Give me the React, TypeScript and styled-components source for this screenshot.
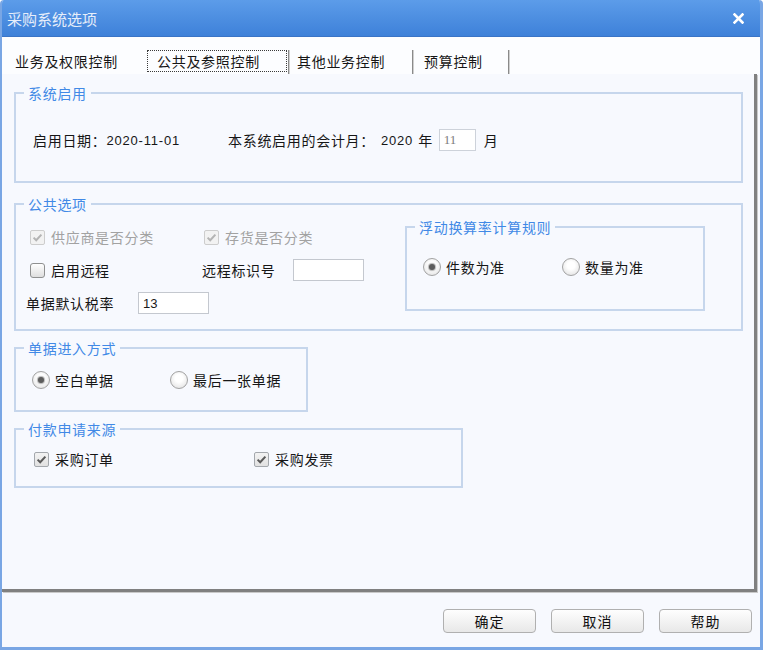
import React from "react";
import styled, { createGlobalStyle } from "styled-components";

const cjk = `"Noto Sans CJK SC", "Noto Sans", sans-serif`;
const num = `"Liberation Sans", Arial, sans-serif`;

const GlobalStyle = createGlobalStyle`
  html, body { margin: 0; padding: 0; }
  body { width: 763px; height: 650px; overflow: hidden; background: #ffffff; font-family: ${cjk}; }
  * { box-sizing: border-box; }
`;

const Window = styled.div`
  width: 763px;
  height: 650px;
  display: flex;
  flex-direction: column;
  background: #f7f9fe;
  border-left: 2px solid #79a6e4;
  border-right: 3px solid #79a6e4;
  border-bottom: 3px solid #79a6e4;
  border-radius: 4px 4px 0 0;
  overflow: hidden;
  font-family: ${cjk};
  font-size: 14px;
  letter-spacing: 0.7px;
  color: #161616;
`;

const TitleBar = styled.div`
  flex: none;
  height: 37px;
  margin: 0 -3px 0 -2px;
  padding: 0 19px 0 7px;
  display: flex;
  align-items: center;
  justify-content: space-between;
  background: linear-gradient(#5c9ce9, #3e81d9);
  border-bottom: 1px solid #3a74c6;
`;

const Title = styled.span`
  font-size: 15px;
  color: #e6eefa;
  letter-spacing: 0;
`;

const CloseBtn = styled.span`
  display: flex;
  width: 11px;
  height: 11px;
`;

const TabStrip = styled.div`
  flex: none;
  height: 37px;
  padding-top: 13px;
  display: flex;
  align-items: flex-end;
  background: #fcfdff;
`;

const Tab = styled.div<{ $w: number; $pl: number }>`
  width: ${(p) => p.$w}px;
  height: 24px;
  padding-left: ${(p) => p.$pl}px;
  display: flex;
  align-items: center;
  padding-bottom: 2px;
  white-space: nowrap;
`;

const FocusBox = styled.div`
  width: 140px;
  height: 22px;
  margin-left: 1px;
  padding-left: 9px;
  display: flex;
  align-items: center;
  border: 1px dotted #3a3a3a;
`;

const TabSep = styled.div`
  width: 2px;
  height: 24px;
  border-left: 1px solid #8a8a8a;
  border-right: 1px solid #cfcfcf;
`;

const Panel = styled.div`
  flex: none;
  height: 518px;
  margin-right: 3px;
  padding: 10px 0 0 12px;
  display: flex;
  flex-direction: column;
  border-right: 3px solid #808080;
  border-bottom: 3px solid #808080;
  box-shadow: 1px 1px 0 #c9c9c9;
`;

const Group = styled.fieldset<{ $w: number; $h: number; $mt?: number }>`
  flex: none;
  width: ${(p) => p.$w}px;
  height: ${(p) => p.$h}px;
  margin: ${(p) => p.$mt ?? 0}px 0 0 0;
  padding: 0;
  min-width: 0;
  border: 2px solid #c6d6ec;
`;

const Legend = styled.legend`
  margin-left: 8px;
  padding: 0 4px;
  line-height: 18px;
  font-size: 14px;
  color: #4189e6;
`;

const GroupBody = styled.div<{ $pt: number; $pl: number }>`
  padding: ${(p) => p.$pt}px 0 0 ${(p) => p.$pl}px;
  display: flex;
  align-items: center;
`;

const Row = styled.div`
  display: flex;
  align-items: center;
  height: 22px;
  white-space: nowrap;
`;

const Cell = styled.div<{ $w?: number }>`
  display: flex;
  align-items: center;
  white-space: nowrap;
  width: ${(p) => (p.$w ? `${p.$w}px` : "auto")};
  flex: none;
`;

const Num = styled.span<{ $ml?: number }>`
  font-family: ${num};
  font-size: 13px;
  letter-spacing: 0.8px;
  margin-left: ${(p) => p.$ml ?? 0}px;
`;

const Text = styled.span<{ $ml?: number; $w?: number; $disabled?: boolean }>`
  margin-left: ${(p) => p.$ml ?? 0}px;
  width: ${(p) => (p.$w ? `${p.$w}px` : "auto")};
  flex: none;
  color: ${(p) => (p.$disabled ? "#a2a2a2" : "#161616")};
`;

const TextBox = styled.input<{ $w: number; $ml?: number; $gray?: boolean }>`
  width: ${(p) => p.$w}px;
  height: 22px;
  margin: 0 0 0 ${(p) => p.$ml ?? 0}px;
  padding: 0 4px;
  border: 1px solid ${(p) => (p.$gray ? "#cdd2da" : "#c4c8cf")};
  background: #ffffff;
  outline: none;
  font-family: ${(p) => (p.$gray ? `"Liberation Serif", serif` : num)};
  font-size: 13px;
  color: ${(p) => (p.$gray ? "#7c7c7c" : "#1a1a1a")};
`;

const LeftGrid = styled.div`
  width: 389px;
  flex: none;
  padding: 13px 0 0 10px;
  display: grid;
  grid-template-columns: 176px 1fr;
  grid-auto-rows: 22px;
  row-gap: 11px;
  align-items: center;
`;

const Span2 = styled.div`
  grid-column: 1 / span 2;
  display: flex;
  align-items: center;
`;

const SplitBody = styled.div`
  display: flex;
  align-items: flex-start;
`;

const Item = styled.label<{ $w?: number; $ml?: number }>`
  display: flex;
  align-items: center;
  gap: 6px;
  width: ${(p) => (p.$w ? `${p.$w}px` : "auto")};
  margin-left: ${(p) => p.$ml ?? 0}px;
  flex: none;
  white-space: nowrap;
`;

const Box = styled.span<{ $disabled?: boolean; $checked?: boolean }>`
  width: 15px;
  height: 15px;
  flex: none;
  display: flex;
  align-items: center;
  justify-content: center;
  border: 1px solid ${(p) => (p.$disabled ? "#cdcdcd" : p.$checked ? "#a4a8ad" : "#8f9090")};
  border-radius: ${(p) => (p.$checked ? 2 : 3)}px;
  background: ${(p) =>
    p.$disabled ? "#f2f2f2" : p.$checked ? "linear-gradient(#f3f3f3, #e1e1e1)" : "linear-gradient(#ffffff, #dedede)"};
`;

const Radio = styled.span<{ $checked?: boolean }>`
  position: relative;
  width: 18px;
  height: 18px;
  flex: none;
  border-radius: 50%;
  border: 1px solid #a2a2a2;
  background: radial-gradient(circle at 50% 40%, #ffffff 30%, #dcdcdc 100%);
  &::after {
    content: "";
    display: ${(p) => (p.$checked ? "block" : "none")};
    position: absolute;
    left: 5px;
    top: 5px;
    width: 6px;
    height: 6px;
    border-radius: 50%;
    background: #5c5c5c;
    box-shadow: 0 0 1px 1px #b5b5b5;
  }
`;

const RadioItem = styled(Item)`
  gap: 5px;
`;

const Footer = styled.div`
  flex: 1;
  display: flex;
  align-items: center;
  justify-content: flex-end;
  gap: 15px;
  padding: 3px 8px 0 0;
`;

const Button = styled.button`
  width: 93px;
  height: 24px;
  padding: 0;
  border: 1px solid #b0b0b0;
  border-radius: 4px;
  background: linear-gradient(#fefefe, #e8e8e8);
  font-family: ${cjk};
  font-size: 14px;
  letter-spacing: 1px;
  color: #111;
`;

const Check = ({ disabled }: { disabled?: boolean }) => (
  <svg width="11" height="11" viewBox="0 0 11 11">
    <path d="M1.6 5.6 L4.2 8.2 L9.4 2.6" fill="none" stroke={disabled ? "#b4b4b4" : "#5a5a5a"} strokeWidth="2" />
  </svg>
);

const CheckItem = ({
  label,
  checked,
  disabled,
  w,
  ml,
}: {
  label: string;
  checked?: boolean;
  disabled?: boolean;
  w?: number;
  ml?: number;
}) => (
  <Item $w={w} $ml={ml}>
    <Box $checked={checked} $disabled={disabled}>
      {checked && <Check disabled={disabled} />}
    </Box>
    <Text $disabled={disabled}>{label}</Text>
  </Item>
);

const RadioOpt = ({ label, checked, w }: { label: string; checked?: boolean; w?: number }) => (
  <RadioItem $w={w}>
    <Radio $checked={checked} />
    <Text>{label}</Text>
  </RadioItem>
);

export default function App() {
  return (
    <>
      <GlobalStyle />
      <Window>
        <TitleBar>
          <Title>采购系统选项</Title>
          <CloseBtn>
            <svg width="11" height="11" viewBox="0 0 11 11">
              <path d="M1.5 1.5 L9.5 9.5 M9.5 1.5 L1.5 9.5" stroke="#ffffff" strokeWidth="2.6" strokeLinecap="square" />
            </svg>
          </CloseBtn>
        </TitleBar>

        <TabStrip>
          <Tab $w={144} $pl={13}>业务及权限控制</Tab>
          <Tab $w={142} $pl={0}>
            <FocusBox>公共及参照控制</FocusBox>
          </Tab>
          <TabSep />
          <Tab $w={122} $pl={7}>其他业务控制</Tab>
          <TabSep />
          <Tab $w={94} $pl={10}>预算控制</Tab>
          <TabSep />
        </TabStrip>

        <Panel>
          <Group $w={729} $h={99}>
            <Legend>系统启用</Legend>
            <GroupBody $pt={27} $pl={17}>
              <Row>
                <Cell $w={195}>
                  <Text>启用日期：</Text>
                  <Num>2020-11-01</Num>
                </Cell>
                <Cell>
                  <Text>本系统启用的会计月：</Text>
                  <Num $ml={6}>2020</Num>
                  <Text $ml={5}>年</Text>
                  <TextBox $w={37} $ml={6} $gray readOnly defaultValue="11" />
                  <Text $ml={8}>月</Text>
                </Cell>
              </Row>
            </GroupBody>
          </Group>

          <Group $w={729} $h={136} $mt={12}>
            <Legend>公共选项</Legend>
            <SplitBody>
              <LeftGrid>
                <CheckItem label="供应商是否分类" checked disabled ml={4} />
                <CheckItem label="存货是否分类" checked disabled ml={2} />
                <CheckItem label="启用远程" ml={4} />
                <Cell>
                  <Text $w={91}>远程标识号</Text>
                  <TextBox $w={71} readOnly defaultValue="" />
                </Cell>
                <Span2>
                  <Text $w={112}>单据默认税率</Text>
                  <TextBox $w={71} readOnly defaultValue="13" />
                </Span2>
              </LeftGrid>
              <Group $w={300} $h={93} $mt={5}>
                <Legend>浮动换算率计算规则</Legend>
                <GroupBody $pt={21} $pl={16}>
                  <RadioOpt label="件数为准" checked w={139} />
                  <RadioOpt label="数量为准" />
                </GroupBody>
              </Group>
            </SplitBody>
          </Group>

          <Group $w={294} $h={73} $mt={8}>
            <Legend>单据进入方式</Legend>
            <GroupBody $pt={13} $pl={16}>
              <RadioOpt label="空白单据" checked w={138} />
              <RadioOpt label="最后一张单据" />
            </GroupBody>
          </Group>

          <Group $w={449} $h={68} $mt={8}>
            <Legend>付款申请来源</Legend>
            <GroupBody $pt={11} $pl={18}>
              <CheckItem label="采购订单" checked w={220} />
              <CheckItem label="采购发票" checked />
            </GroupBody>
          </Group>
        </Panel>

        <Footer>
          <Button>确定</Button>
          <Button>取消</Button>
          <Button>帮助</Button>
        </Footer>
      </Window>
    </>
  );
}
